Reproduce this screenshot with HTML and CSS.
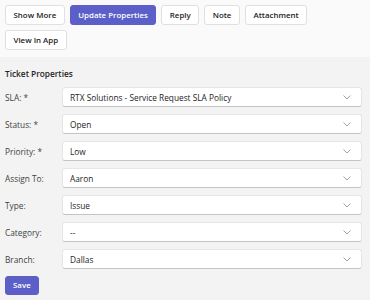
FILE: index.html
```html
<!DOCTYPE html>
<html>
<head>
<meta charset="utf-8">
<link rel="stylesheet" href="styles.css">
</head>
<body>
<div class="toolbar">
  <button class="btn">Show More</button>
  <button class="btn primary">Update Properties</button>
  <button class="btn">Reply</button>
  <button class="btn">Note</button>
  <button class="btn">Attachment</button>
  <button class="btn">View In App</button>
</div>
<div class="form">
  <div class="title">Ticket Properties</div>
  <div class="rows">
    <div class="row"><span class="label">SLA: *</span><div class="select"><span>RTX Solutions - Service Request SLA Policy</span><svg class="chev" viewBox="0 0 8 5"><path d="M0.5 0.5 L4 4 L7.5 0.5"/></svg></div></div>
    <div class="row"><span class="label">Status: *</span><div class="select"><span>Open</span><svg class="chev" viewBox="0 0 8 5"><path d="M0.5 0.5 L4 4 L7.5 0.5"/></svg></div></div>
    <div class="row"><span class="label">Priority: *</span><div class="select"><span>Low</span><svg class="chev" viewBox="0 0 8 5"><path d="M0.5 0.5 L4 4 L7.5 0.5"/></svg></div></div>
    <div class="row"><span class="label">Assign To:</span><div class="select"><span>Aaron</span><svg class="chev" viewBox="0 0 8 5"><path d="M0.5 0.5 L4 4 L7.5 0.5"/></svg></div></div>
    <div class="row"><span class="label">Type:</span><div class="select"><span>Issue</span><svg class="chev" viewBox="0 0 8 5"><path d="M0.5 0.5 L4 4 L7.5 0.5"/></svg></div></div>
    <div class="row"><span class="label">Category:</span><div class="select"><span>--</span><svg class="chev" viewBox="0 0 8 5"><path d="M0.5 0.5 L4 4 L7.5 0.5"/></svg></div></div>
    <div class="row"><span class="label">Branch:</span><div class="select"><span>Dallas</span><svg class="chev" viewBox="0 0 8 5"><path d="M0.5 0.5 L4 4 L7.5 0.5"/></svg></div></div>
  </div>
  <button class="btn primary save">Save</button>
</div>
</body>
</html>
```
FILE: styles.css
```css
html, body {
  margin: 0;
  padding: 0;
}
body {
  background: #f3f3f3;
  font-family: "Open Sans", "Noto Sans", sans-serif;
  font-size: 8.3px;
  color: #242424;
  width: 370px;
  height: 300px;
  overflow: hidden;
}
.toolbar {
  background: #fafafa;
  padding: 5px 5px 7px;
  display: flex;
  flex-wrap: wrap;
  gap: 5px;
}
.btn {
  height: 20px;
  padding: 0 7.5px;
  border: 1px solid #e0e0e0;
  border-radius: 3px;
  background: #fff;
  font-family: inherit;
  font-size: 7.9px;
  font-weight: 600;
  color: #242424;
  line-height: 18px;
}
.btn.primary {
  background: #5b5fc7;
  border-color: #5b5fc7;
  color: #fff;
}
.form {
  padding: 11px 8px 0 5px;
}
.title {
  font-weight: 600;
  line-height: 12px;
  height: 12px;
  margin-bottom: 7px;
}
.rows {
  display: flex;
  flex-direction: column;
  gap: 7px;
}
.row {
  display: flex;
  align-items: center;
  height: 20px;
}
.label {
  width: 57px;
  color: #424242;
}
.select {
  flex: 1;
  height: 20px;
  box-sizing: border-box;
  background: #fff;
  border: 1px solid #e6e6e6;
  border-bottom-color: #c4c4c4;
  border-radius: 3px;
  display: flex;
  align-items: center;
  justify-content: space-between;
  padding: 0 10px 0 7px;
}
.chev {
  width: 8px;
  height: 5px;
  fill: none;
  stroke: #8a8a8a;
  stroke-width: 0.8;
}
.save {
  margin-top: 7px;
  height: 19px;
  line-height: 17px;
  padding: 0 7px;
}
```
